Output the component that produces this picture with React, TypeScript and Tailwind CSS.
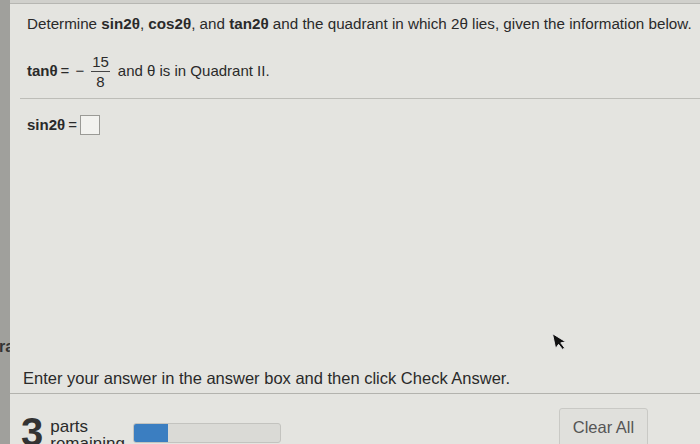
const font = { fontFamily: '"Liberation Sans", Arial, sans-serif' };

function Cursor() {
  return (
    <svg
      className="absolute left-[553px] top-[331px] rotate-[-12deg]"
      width="14"
      height="20"
      viewBox="0 0 12 17"
    >
      <path d="M1 1 L1 14 L4.2 11 L6.6 16 L8.6 15.1 L6.3 10.2 L10.6 10.2 Z" fill="#111" stroke="#eee" strokeWidth="0.7" />
    </svg>
  );
}

export default function App() {
  return (
    <div
      className="relative flex h-[444px] w-[700px] overflow-hidden bg-[#e4e4e0] text-[#2a2a2a]"
      style={font}
    >
      {/* left sidebar sliver */}
      <div className="flex w-[10px] shrink-0 flex-col overflow-hidden bg-[#a0a09c] pt-[339px]">
        <span className="-ml-[1px] whitespace-nowrap text-[16px] font-bold leading-none text-[#333]">ra</span>
      </div>

      <div className="flex min-w-0 flex-1 flex-col">
        <div className="h-[3px] bg-[#d0d0cc]" />
        <div className="h-px bg-[#b6b6b2]" />

        <div className="whitespace-nowrap pl-[17px] pt-[11px] text-[15.2px] leading-[18px]">
          Determine <b>sin2θ</b>, <b>cos2θ</b>, and <b>tan2θ</b> and the quadrant in which 2θ lies,
          given the information below.
        </div>

        {/* given */}
        <div className="mt-[19px] flex items-center pl-[17px] text-[15px]">
          <b>tanθ</b>
          <span className="ml-[3px]">=</span>
          <span className="ml-[6px]">−</span>
          <span className="ml-[7px] inline-flex flex-col items-center leading-[19px]">
            <span className="px-[1px]">15</span>
            <span className="h-px w-full bg-[#444]" />
            <span>8</span>
          </span>
          <span className="ml-[8px]">and θ is in Quadrant II.</span>
        </div>

        <div className="ml-[10px] mt-[7px] h-px bg-[#bdbdb8]" />

        <div className="mt-[15px] flex items-center pl-[17px] text-[15px]">
          <b>sin2θ</b>
          <span className="ml-[3px]">=</span>
          <span className="ml-[3px] h-[20px] w-[20px] border border-[#9a9a96] bg-[#f2f2ef]" />
        </div>

        <div className="flex-1" />

        <div className="whitespace-nowrap pb-[5px] pl-[13px] text-[16.5px] leading-[19px]">
          Enter your answer in the answer box and then click Check Answer.
        </div>
        <div className="h-px bg-[#b3b3ae]" />

        <div className="flex h-[50px] items-start pl-[11px] pt-[14px]">
          <span className="mt-[6px] text-[40px] font-bold leading-[36px] text-[#333]">3</span>
          <div className="ml-[7px] mt-[10px] flex flex-col text-[17px] leading-[17px]">
            <span>parts</span>
            <span>remaining</span>
          </div>
          <div className="ml-[8px] mt-[15px] flex h-[20px] w-[148px] shrink-0 overflow-hidden rounded-[3px] border border-[#c3c3bf] bg-[#dadad6]">
            <div className="w-[34px] bg-[#3b7ec1]" />
          </div>
          <div className="flex-1" />
          <button className="mr-[52px] h-[40px] w-[89px] shrink-0 rounded-[3px] border border-[#c9c9c5] bg-[#e0e0dc] pb-[2px] text-[16.5px] text-[#555]">
            Clear All
          </button>
        </div>
      </div>

      <Cursor />
    </div>
  );
}
